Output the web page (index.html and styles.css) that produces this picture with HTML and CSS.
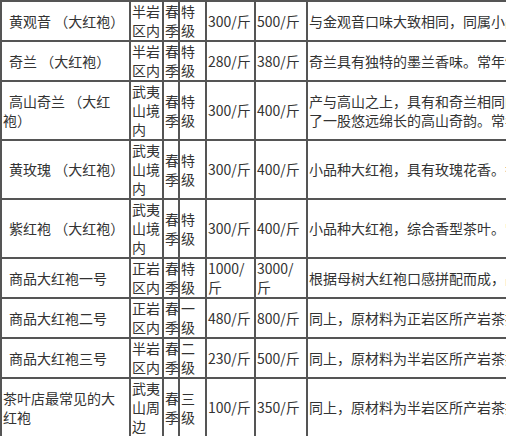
FILE: index.html
```html
<!DOCTYPE html>
<html lang="zh">
<head>
<meta charset="utf-8">
<title>大红袍价格</title>
<link rel="stylesheet" href="styles.css">
</head>
<body>
<table class="tea">
  <colgroup>
    <col class="c-name">
    <col class="c-area">
    <col class="c-season">
    <col class="c-grade">
    <col class="c-price">
    <col class="c-price2">
    <col class="c-desc">
  </colgroup>
  <tbody>
    <tr>
      <td class="ind">黄观音 （大红袍）</td>
      <td>半岩区内</td><td>春季</td><td>特级</td><td>300/斤</td><td>500/斤</td>
      <td>与金观音口味大致相同，同属小品种大红袍。</td>
    </tr>
    <tr>
      <td class="ind">奇兰 （大红袍）</td>
      <td>半岩区内</td><td>春季</td><td>特级</td><td>280/斤</td><td>380/斤</td>
      <td>奇兰具有独特的墨兰香味。常年饮用回甘。</td>
    </tr>
    <tr>
      <td class="ind">高山奇兰 （大红袍）</td>
      <td>武夷山境内</td><td>春季</td><td>特级</td><td>300/斤</td><td>400/斤</td>
      <td>产与高山之上，具有和奇兰相同的兰花香气，又多了一股悠远绵长的高山奇韵。常年饮用。</td>
    </tr>
    <tr>
      <td class="ind">黄玫瑰 （大红袍）</td>
      <td>武夷山境内</td><td>春季</td><td>特级</td><td>300/斤</td><td>400/斤</td>
      <td>小品种大红袍，具有玫瑰花香。香气高扬。</td>
    </tr>
    <tr>
      <td class="ind">紫红袍 （大红袍）</td>
      <td>武夷山境内</td><td>春季</td><td>特级</td><td>300/斤</td><td>400/斤</td>
      <td>小品种大红袍，综合香型茶叶。常年饮用。</td>
    </tr>
    <tr>
      <td class="ind">商品大红袍一号</td>
      <td>正岩区内</td><td>春季</td><td>特级</td><td>1000/斤</td><td>3000/斤</td>
      <td>根据母树大红袍口感拼配而成，品质上乘。</td>
    </tr>
    <tr>
      <td class="ind">商品大红袍二号</td>
      <td>正岩区内</td><td>春季</td><td>一级</td><td>480/斤</td><td>800/斤</td>
      <td>同上，原材料为正岩区所产岩茶拼配。</td>
    </tr>
    <tr>
      <td class="ind">商品大红袍三号</td>
      <td>半岩区内</td><td>春季</td><td>二级</td><td>230/斤</td><td>500/斤</td>
      <td>同上，原材料为半岩区所产岩茶拼配。</td>
    </tr>
    <tr>
      <td>茶叶店最常见的大红袍</td>
      <td>武夷山周边</td><td>春季</td><td>三级</td><td>100/斤</td><td>350/斤</td>
      <td>同上，原材料为半岩区所产岩茶拼配。</td>
    </tr>
  </tbody>
</table>
</body>
</html>
```
FILE: styles.css
```css
html, body {
  margin: 0;
  padding: 0;
  overflow: hidden;
  background: #fff;
}

.tea {
  table-layout: fixed;
  width: 622px;
  border-collapse: separate;
  border-spacing: 0;
  border: 1px solid #555;
  font-family: "Noto Sans CJK SC", sans-serif;
  font-size: 14px;
  line-height: 19px;
  color: #333;
}

.tea td {
  border: 1px solid #555;
  padding: 0 1px;
  vertical-align: middle;
  text-align: left;
  box-sizing: border-box;
  overflow: hidden;
}

.c-name { width: 129px; }
.c-area { width: 33px; }
.c-season { width: 16px; }
.c-grade { width: 27px; }
.c-price { width: 49px; }
.c-price2 { width: 52px; }
.c-desc { width: 314px; }

.tea td.ind {
  text-indent: 6px;
}
```
